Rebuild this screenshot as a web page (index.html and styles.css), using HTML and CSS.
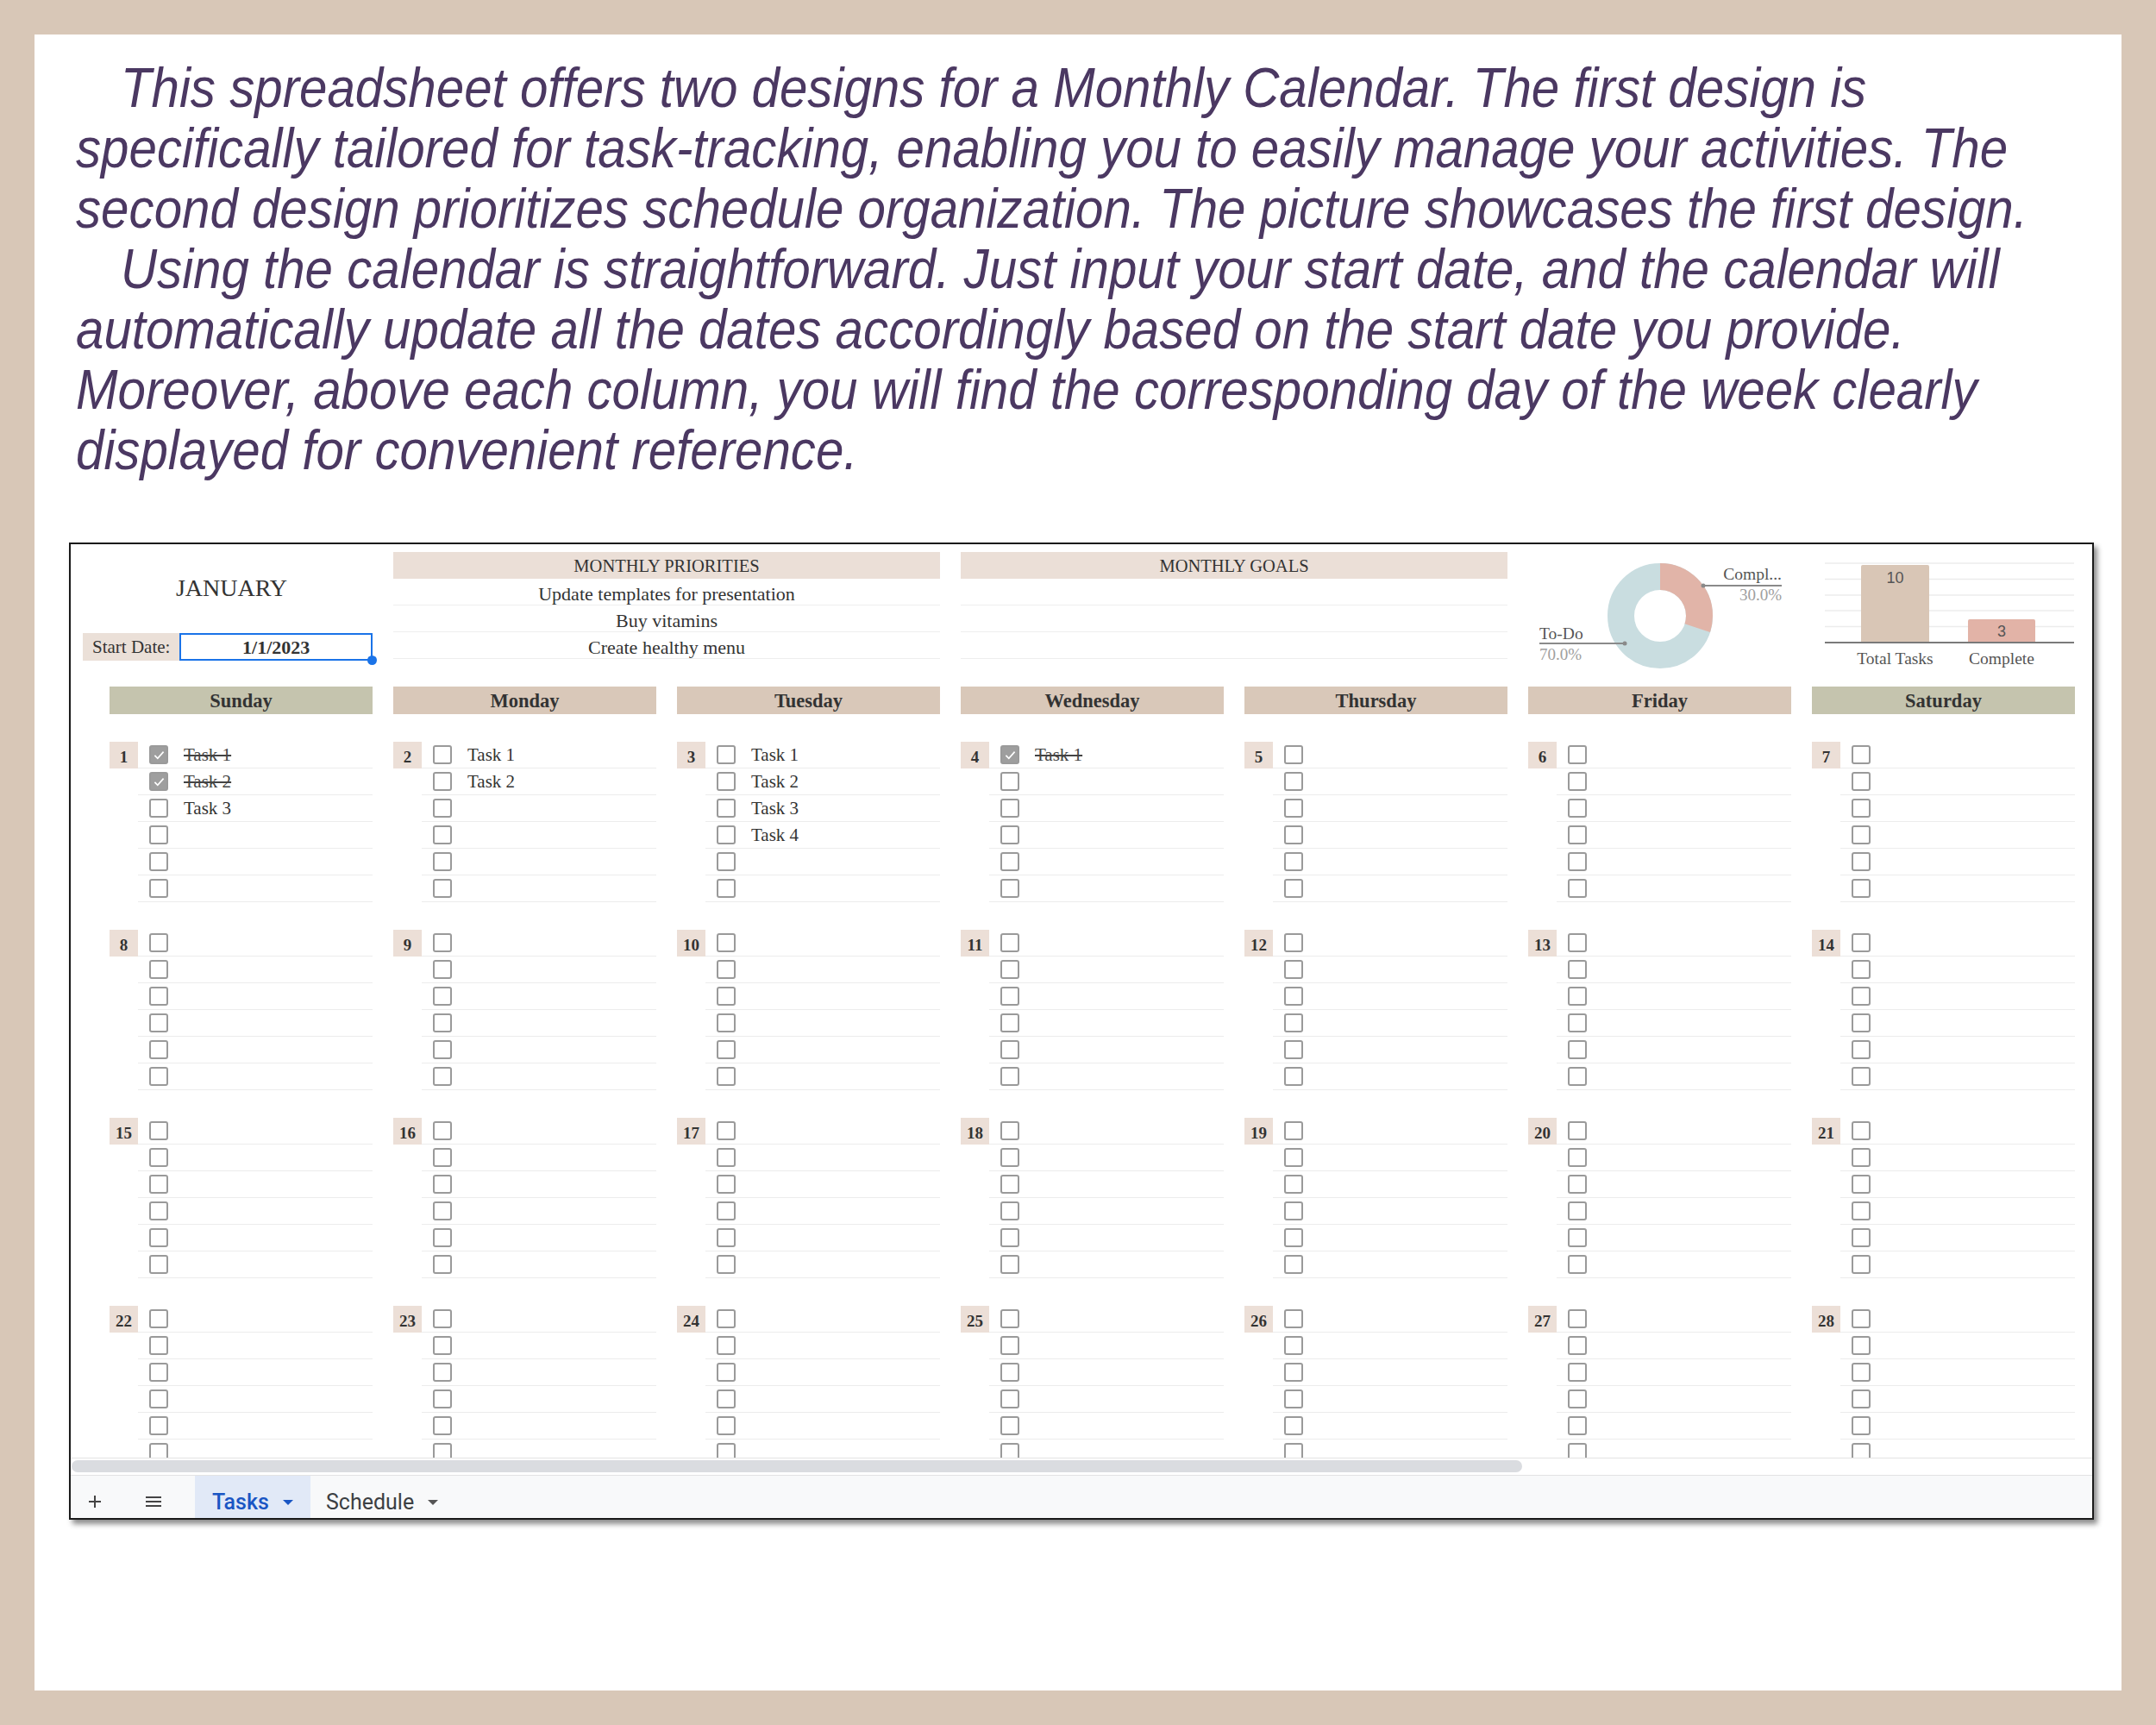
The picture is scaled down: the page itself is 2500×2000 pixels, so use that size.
FILE: index.html
```html
<!DOCTYPE html>
<html>
<head>
    <title>Monthly Calendar</title>
    <link rel="stylesheet" href="styles.css">
</head>
<body>
    <div class="frame">
        <div class="intro">
            <p>This spreadsheet offers two designs for a Monthly Calendar. The first design is<br>specifically tailored for task-tracking, enabling you to easily manage your activities. The<br>second design prioritizes schedule organization. The picture showcases the first design.</p>
            <p>Using the calendar is straightforward. Just input your start date, and the calendar will<br>automatically update all the dates accordingly based on the start date you provide.<br>Moreover, above each column, you will find the corresponding day of the week clearly<br>displayed for convenient reference.</p>
        </div>

        <div class="sheet">
            <div class="sheet-body">
                <div class="top">
                    <div class="month-cell">
                        <div class="month">JANUARY</div>
                        <div class="start-row">
                            <span class="start-label">Start Date:</span>
                            <span class="start-input">1/1/2023<i class="handle"></i></span>
                        </div>
                    </div>

                    <div class="list-block">
                        <div class="list-head">MONTHLY PRIORITIES</div>
                        <div class="list-row">Update templates for presentation</div>
                        <div class="list-row">Buy vitamins</div>
                        <div class="list-row">Create healthy menu</div>
                    </div>

                    <div class="list-block">
                        <div class="list-head">MONTHLY GOALS</div>
                        <div class="list-row"></div>
                        <div class="list-row"></div>
                        <div class="list-row"></div>
                    </div>

                    <div class="chart">
                        <svg width="305" height="150" viewBox="0 0 305 150">
                            <circle cx="153" cy="74" r="45.5" fill="none" stroke="#c9dde0" stroke-width="31"/>
                            <circle cx="153" cy="74" r="45.5" fill="none" stroke="#e1b4a8" stroke-width="31"
                                    stroke-dasharray="85.8 300" transform="rotate(-90 153 74)"/>
                            <line x1="203" y1="39" x2="294" y2="39" stroke="#8a8a8a" stroke-width="2"/>
                            <circle cx="203" cy="39" r="2.5" fill="#8a8a8a"/>
                            <text x="294" y="32" text-anchor="end" class="lbl">Compl...</text>
                            <text x="294" y="56" text-anchor="end" class="pct">30.0%</text>
                            <line x1="13" y1="106" x2="112" y2="106" stroke="#8a8a8a" stroke-width="2"/>
                            <circle cx="112" cy="106" r="2.5" fill="#8a8a8a"/>
                            <text x="13" y="101" class="lbl">To-Do</text>
                            <text x="13" y="125" class="pct">70.0%</text>
                        </svg>
                    </div>

                    <div class="chart">
                        <svg width="305" height="150" viewBox="0 0 305 150">
                            <g stroke="#ececec" stroke-width="1.5">
                                <line x1="15" y1="13" x2="304" y2="13"/>
                                <line x1="15" y1="31.5" x2="304" y2="31.5"/>
                                <line x1="15" y1="50" x2="304" y2="50"/>
                                <line x1="15" y1="68" x2="304" y2="68"/>
                                <line x1="15" y1="86.5" x2="304" y2="86.5"/>
                            </g>
                            <path d="M57 105 V17 a2 2 0 0 1 2 -2 H134 a2 2 0 0 1 2 2 V105 Z" fill="#d9c6b6"/>
                            <path d="M181 105 V80 a2 2 0 0 1 2 -2 H257 a2 2 0 0 1 2 2 V105 Z" fill="#e2b3a7"/>
                            <line x1="15" y1="105" x2="304" y2="105" stroke="#7a7a7a" stroke-width="2"/>
                            <text x="96.5" y="36" text-anchor="middle" class="val">10</text>
                            <text x="220" y="98" text-anchor="middle" class="val">3</text>
                            <text x="96.5" y="130" text-anchor="middle" class="lbl">Total Tasks</text>
                            <text x="220" y="130" text-anchor="middle" class="lbl">Complete</text>
                        </svg>
                    </div>
                </div>

                <div class="day-heads">
                    <div class="day-head weekend">Sunday</div>
                    <div class="day-head">Monday</div>
                    <div class="day-head">Tuesday</div>
                    <div class="day-head">Wednesday</div>
                    <div class="day-head">Thursday</div>
                    <div class="day-head">Friday</div>
                    <div class="day-head weekend">Saturday</div>
                </div>

                <div id="weeks"></div>
            </div>

            <div class="hscroll"><div class="thumb"></div></div>

            <div class="tabs">
                <div class="tab-icon">
                    <svg width="16" height="16" viewBox="0 0 16 16"><path d="M8 1v14M1 8h14" stroke="#444" stroke-width="2"/></svg>
                </div>
                <div class="tab-icon menu">
                    <svg width="18" height="14" viewBox="0 0 18 14"><path d="M0 2h18M0 7h18M0 12h18" stroke="#444" stroke-width="2"/></svg>
                </div>
                <div class="tab active">Tasks <span class="caret"></span></div>
                <div class="tab">Schedule <span class="caret"></span></div>
            </div>
        </div>
    </div>

    <script>
        // tasks entered for the first days of the month: [text, done]
        const tasks = {
            1: [['Task 1', true], ['Task 2', true], ['Task 3', false]],
            2: [['Task 1', false], ['Task 2', false]],
            3: [['Task 1', false], ['Task 2', false], ['Task 3', false], ['Task 4', false]],
            4: [['Task 1', true]]
        };
        const ROWS = 6;

        const weeks = document.getElementById('weeks');
        for (let w = 0; w < 4; w++) {
            const week = document.createElement('div');
            week.className = 'week';
            for (let d = 1; d <= 7; d++) {
                const date = w * 7 + d;
                const list = tasks[date] || [];
                let rows = '';
                for (let r = 0; r < ROWS; r++) {
                    const t = list[r];
                    const done = t && t[1];
                    rows += `<div class="task${done ? ' done' : ''}">
                        <span class="box"></span>
                        <span class="text">${t ? t[0] : ''}</span>
                    </div>`;
                }
                week.insertAdjacentHTML('beforeend',
                    `<div class="day"><div class="num">${date}</div><div class="tasks">${rows}</div></div>`);
            }
            weeks.appendChild(week);
        }
    </script>
</body>
</html>
```

FILE: styles.css
```css
body {
    margin: 0;
    background: #d8c7b7;
    font-family: "Liberation Serif", serif;
    color: #333;
}

.frame {
    margin: 40px;
    width: 2420px;
    height: 1920px;
    background: #fff;
    box-sizing: border-box;
    padding: 27px 0 0 48px;
}

/* the intro type is a narrow italic; squeeze the regular face to that width */
.intro p {
    margin: 0;
    width: 2120px;
    font-family: "Liberation Sans", Arial, sans-serif;
    font-style: italic;
    font-size: 65px;
    line-height: 70px;
    color: #4b3862;
    text-indent: 58px;
    white-space: nowrap;
    transform: scaleX(0.896);
    transform-origin: 0 0;
}

/* spreadsheet window */
.sheet {
    margin: 72px 0 0 -8px;
    width: 2348px;
    height: 1133px;
    box-sizing: border-box;
    border: 2px solid #1a1a1a;
    box-shadow: 4px 5px 6px rgba(0, 0, 0, 0.45);
    display: flex;
    flex-direction: column;
    background: #fff;
}

.sheet-body {
    flex: 1;
    overflow: hidden;
    padding: 9px 0 0 45px;
}

.top,
.day-heads,
.week {
    display: grid;
    grid-template-columns: repeat(7, 305px);
    column-gap: 24px;
}

.top {
    height: 156px;
    align-items: start;
}

.month-cell {
    display: flex;
    flex-direction: column;
}

.month {
    padding-top: 26px;
    font-size: 28px;
    line-height: 32px;
    text-align: center;
    padding-right: 22px;
}

.start-row {
    display: flex;
    margin: 36px 0 0 -31px;
    height: 32px;
}

.start-label {
    width: 113px;
    background: #ebe0d8;
    font-size: 21px;
    line-height: 33px;
    padding-left: 11px;
    box-sizing: border-box;
    white-space: nowrap;
}

.start-input {
    position: relative;
    width: 225px;
    border: 2px solid #1a73e8;
    box-sizing: border-box;
    text-align: center;
    font-weight: bold;
    font-size: 22px;
    line-height: 29px;
}

.start-input .handle {
    position: absolute;
    right: -7px;
    bottom: -7px;
    width: 11px;
    height: 11px;
    border-radius: 50%;
    background: #1a73e8;
}

.list-block {
    grid-column: span 2;
}

.list-head {
    height: 31px;
    line-height: 32px;
    background: #ebdfd7;
    text-align: center;
    font-size: 20.5px;
}

.list-row {
    height: 31px;
    line-height: 35px;
    border-bottom: 1px solid #eeeeee;
    box-sizing: border-box;
    text-align: center;
    font-size: 22px;
}

.chart svg {
    display: block;
}

.chart .lbl {
    font-family: "Liberation Serif", serif;
    font-size: 19.5px;
    fill: #555;
}

.chart .pct {
    font-family: "Liberation Serif", serif;
    font-size: 19px;
    fill: #a0a0a0;
}

.chart .val {
    font-family: "Liberation Sans", Arial, sans-serif;
    font-size: 18px;
    fill: #555;
}

.day-heads {
    margin-bottom: 32px;
}

.day-head {
    height: 32px;
    line-height: 33px;
    background: #d9c8b9;
    text-align: center;
    font-weight: bold;
    font-size: 22.5px;
}

.day-head.weekend {
    background: #c5c4ae;
}

/* one week = 6 task rows per day + a blank row */
.week {
    margin-bottom: 32px;
}

.day {
    display: grid;
    grid-template-columns: 33px 1fr;
    align-items: start;
}

.num {
    height: 31px;
    line-height: 35px;
    background: #ecdfd7;
    text-align: center;
    font-weight: bold;
    font-size: 19px;
}

.task {
    height: 31px;
    display: flex;
    align-items: center;
    border-bottom: 1px solid #ececec;
    box-sizing: border-box;
}

.box {
    width: 22px;
    height: 22px;
    margin-left: 13px;
    border: 2px solid #9a9a9a;
    border-radius: 3px;
    box-sizing: border-box;
    flex-shrink: 0;
}

.task.done .box {
    background: #9e9e9e url("data:image/svg+xml,%3Csvg xmlns='http://www.w3.org/2000/svg' viewBox='0 0 20 20'%3E%3Cpath d='M4 10.5l4 4 8-9' fill='none' stroke='white' stroke-width='2'/%3E%3C/svg%3E") center / 17px no-repeat;
}

.text {
    margin-left: 18px;
    font-size: 21px;
    line-height: 30px;
}

.task.done .text {
    text-decoration: line-through;
    color: #444;
}

/* bottom bar */
.hscroll {
    height: 21px;
    border-top: 1px solid #e3e3e3;
    border-bottom: 1px solid #e3e3e3;
    box-sizing: border-box;
    padding: 2px 0 0 1px;
}

.thumb {
    width: 1682px;
    height: 14px;
    border-radius: 7px;
    background: #dadce0;
}

.tabs {
    height: 49px;
    background: #f8f9fa;
    display: flex;
    align-items: stretch;
    font-family: Roboto, "Liberation Sans", sans-serif;
}

.tab-icon {
    width: 56px;
    padding-top: 10px;
    display: flex;
    align-items: center;
    justify-content: center;
}

.tab-icon.menu {
    width: 80px;
}

.tab {
    display: flex;
    align-items: center;
    padding: 12px 18px 0 18px;
    font-size: 25px;
    color: #3c4043;
}

.tab.active {
    margin-left: 8px;
    width: 134px;
    box-sizing: border-box;
    padding-left: 20px;
    background: #e1e9f7;
    color: #1a56c4;
    font-weight: 500;
}

.caret {
    margin-left: 16px;
    width: 0;
    height: 0;
    border-left: 6px solid transparent;
    border-right: 6px solid transparent;
    border-top: 6px solid #555;
}

.tab.active .caret {
    border-top-color: #1a56c4;
}
```
